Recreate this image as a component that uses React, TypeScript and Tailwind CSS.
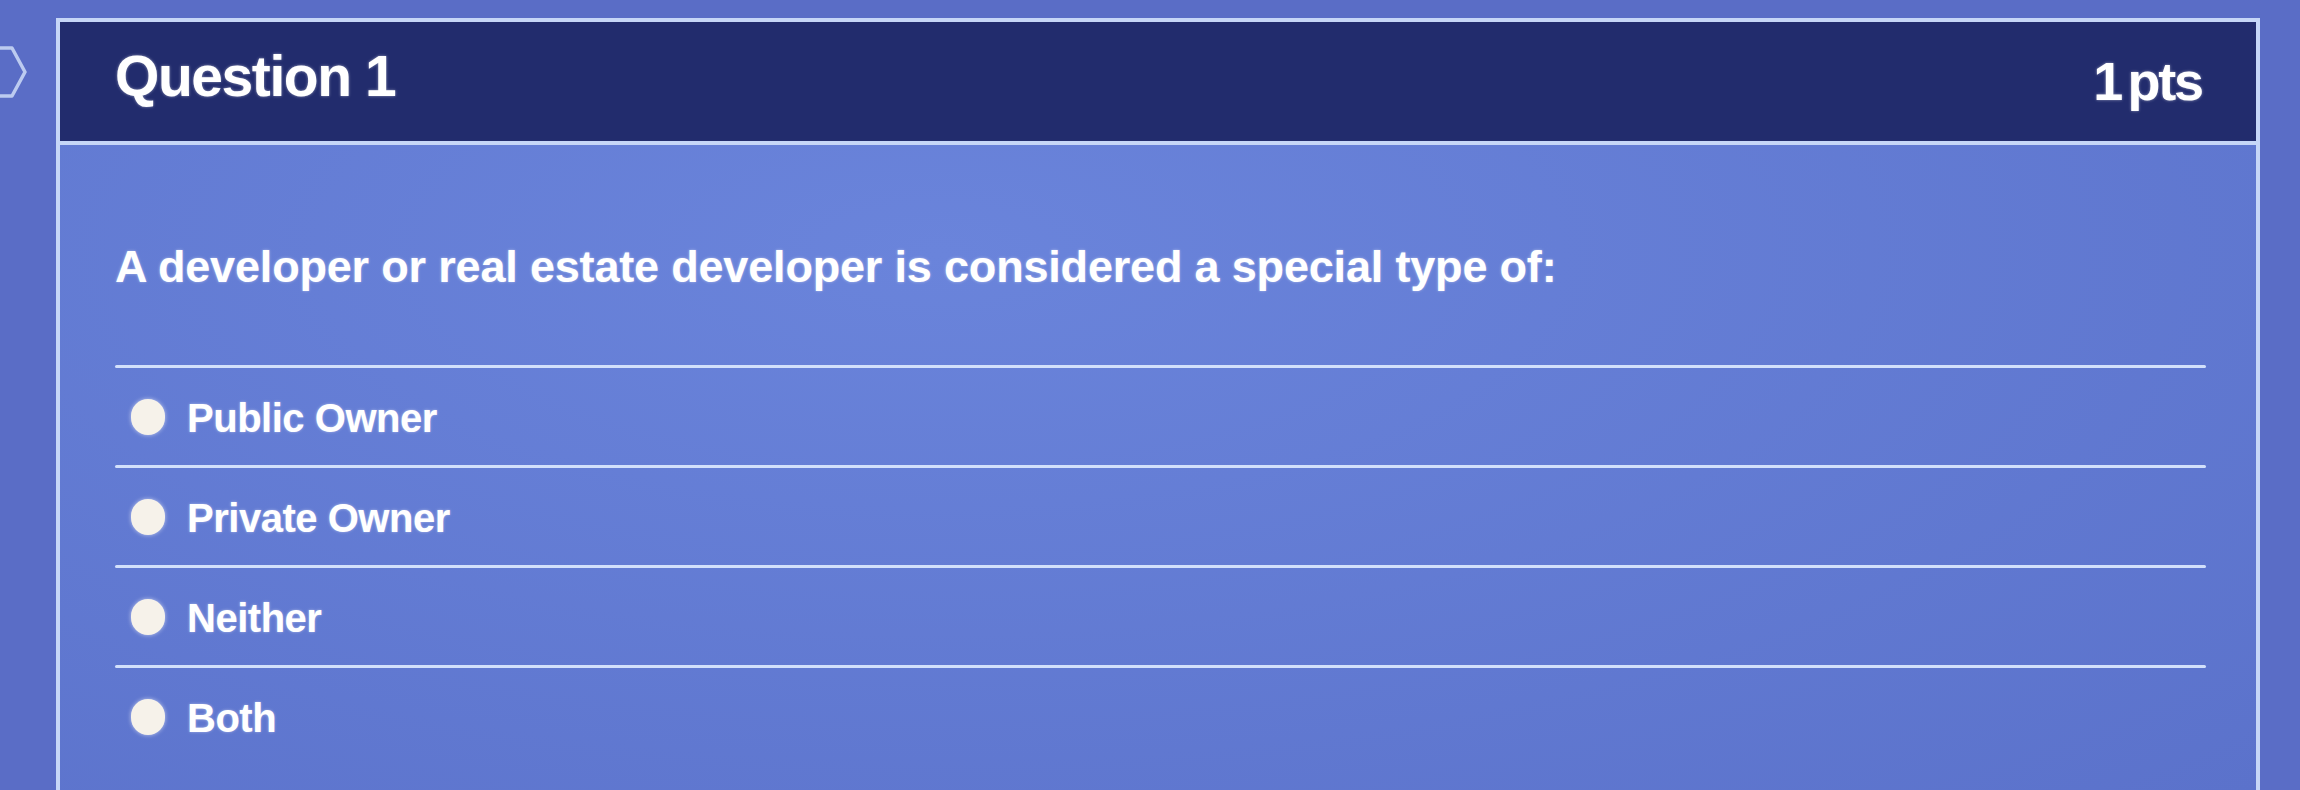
import React from "react";

const options = ["Public Owner", "Private Owner", "Neither", "Both"];

export default function App() {
  return (
    <div
      className="w-[2300px] h-[790px] overflow-hidden flex bg-[#5a6dc6] text-white"
      style={{ fontFamily: "'Liberation Sans', Arial, sans-serif" }}
    >
      <div className="w-[56px] shrink-0 pt-[46px]">
        <svg width="32" height="52" viewBox="0 0 32 52" className="-ml-[4px]">
          <path
            d="M0 2 L16 2 L29 26 L16 50 L0 50"
            fill="none"
            stroke="#bccbf0"
            strokeWidth="3.5"
            strokeLinejoin="round"
          />
        </svg>
      </div>
      <div className="mt-[18px] mr-[40px] flex-1 flex flex-col border-[4px] border-b-0 border-[#c6d6f7] bg-[radial-gradient(ellipse_at_40%_30%,#6a84db,#5b72cb)]">
        <div className="h-[123px] shrink-0 flex items-center justify-between bg-[#222c6d] border-b-[4px] border-[#c6d6f7] pl-[55px] pr-[54px]">
          <div className="text-[57px] font-bold tracking-[-0.025em] leading-none pb-[10px] [text-shadow:0_0_3px_rgba(255,255,255,0.5)]">
            Question 1
          </div>
          <div className="text-[54px] font-bold tracking-[-0.04em] [word-spacing:-0.12em] leading-none pb-[2px] [text-shadow:0_0_3px_rgba(255,255,255,0.5)]">
            1 pts
          </div>
        </div>
        <div className="flex-1 pl-[55px] pr-[50px] pt-[93px]">
          <div className="text-[45px] font-bold tracking-[-0.004em] leading-[58px] [text-shadow:0_0_3px_rgba(255,255,255,0.45)]">
            A developer or real estate developer is considered a special type of:
          </div>
          <div className="mt-[69px] flex flex-col">
            {options.map((o) => (
              <div key={o} className="flex flex-col">
                <div className="h-[3px] bg-[#d2e0fb] rounded-full" />
                <div className="h-[97px] flex items-center pl-[16px] gap-[22px]">
                  <div className="w-[34px] h-[36px] rounded-full bg-[#f6f2ea] shadow-[0_0_4px_rgba(255,255,255,0.6)]" />
                  <div className="text-[40px] font-bold tracking-[-0.012em] leading-none pt-[2px] [text-shadow:0_0_3px_rgba(255,255,255,0.45)]">
                    {o}
                  </div>
                </div>
              </div>
            ))}
          </div>
        </div>
      </div>
    </div>
  );
}
